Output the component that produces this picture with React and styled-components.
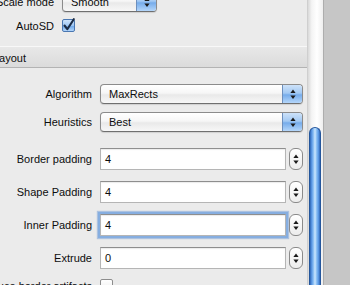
import React from "react";
import styled, { createGlobalStyle } from "styled-components";

const Global = createGlobalStyle`
  html, body { margin: 0; padding: 0; overflow: hidden; background: #c6c6c6; }
  body { font-family: "Liberation Sans", Arial, sans-serif; font-size: 11px; color: #111; }
  * { box-sizing: border-box; }
`;

const Window = styled.div`
  display: flex;
  width: 350px;
  height: 285px;
  overflow: hidden;
  background: #c6c6c6;
`;

const Panel = styled.div`
  flex: 0 0 308px;
  background: #ebebeb;
  border-right: 1px solid #cfcfcf;
  overflow: hidden;
  display: flex;
  flex-direction: column;
`;

const ScrolledContent = styled.div`
  margin-top: -9px;
  display: flex;
  flex-direction: column;
`;

const Group = styled.div`
  display: flex;
  flex-direction: column;
  padding-top: ${(p) => p.$padTop || 0}px;
`;

const Row = styled.div`
  display: grid;
  grid-template-columns: ${(p) => p.$labelWidth}px auto;
  column-gap: 8px;
  align-items: center;
  height: ${(p) => p.$h}px;
  margin-top: ${(p) => p.$mt || 0}px;
`;

const Label = styled.label`
  justify-self: end;
  white-space: nowrap;
  font-size: 11px;
  color: #0d0d0d;
`;

const SectionHeader = styled.div`
  height: 22px;
  margin-top: 14px;
  display: flex;
  align-items: center;
  background: linear-gradient(#e8e8e8, #dbdbdb);
  border-top: 1px solid #f8f8f8;
  border-bottom: 1px solid #b3b3b3;
  font-size: 11px;
  color: #0d0d0d;
`;

const HeaderText = styled.span`
  margin-left: -7px;
  padding-top: 1px;
`;

const Popup = styled.div`
  display: flex;
  align-items: stretch;
  width: ${(p) => p.$width}px;
  height: 20px;
  border: 1px solid #8b8b8b;
  border-bottom-color: #6f6f6f;
  border-radius: 4px;
  background: linear-gradient(#ffffff, #f6f6f6 45%, #e9e9e9 55%, #f7f7f7);
  box-shadow: 0 1px 1px rgba(0, 0, 0, 0.12);
  overflow: hidden;
`;

const PopupText = styled.span`
  flex: 1;
  display: flex;
  align-items: center;
  padding-left: 8px;
  font-size: 11px;
  color: #0d0d0d;
`;

const PopupArrows = styled.span`
  flex: 0 0 20px;
  display: flex;
  align-items: center;
  justify-content: center;
  border-left: 1px solid #6d8fbd;
  background: linear-gradient(#cde2f9, #a3c9f3 45%, #76aceb 55%, #b4d6fa);
`;

const FieldGroup = styled.div`
  display: flex;
  align-items: center;
  gap: 3px;
`;

const Field = styled.div`
  width: 186px;
  height: 22px;
  display: flex;
  align-items: center;
  padding-left: 4px;
  background: #fff;
  border: 1px solid #b5b5b5;
  border-top-color: #8e8e8e;
  box-shadow: inset 0 1px 1px rgba(0, 0, 0, 0.08)
    ${(p) => (p.$focused ? ", 0 0 0 2px #86aee0, 0 0 1px 3px rgba(120,160,215,0.55)" : "")};
  font-size: 11px;
  color: #0d0d0d;
`;

const Stepper = styled.div`
  width: 14px;
  height: 22px;
  border: 1px solid #8a8a8a;
  border-radius: 6px;
  background: linear-gradient(#ffffff, #ececec);
  display: flex;
  align-items: center;
  justify-content: center;
`;

const CheckBox = styled.span`
  width: 13px;
  height: 13px;
  display: grid;
  place-items: center;
  border-radius: 2px;
  border: 1px solid ${(p) => (p.$checked ? "#4a77b1" : "#8d8d8d")};
  background: ${(p) =>
    p.$checked
      ? "linear-gradient(#cde3fb, #9fc7f3 50%, #72aaea 55%, #b2d5fa)"
      : "linear-gradient(#ffffff, #ededed)"};
  svg { overflow: visible; }
`;

const Scrollbar = styled.div`
  flex: 0 0 16px;
  display: flex;
  flex-direction: column;
  padding: 0 2px 0 1px;
  background: linear-gradient(to right, #d9d9d9, #f4f4f4 25%, #ffffff 60%, #eeeeee);
  border-right: 1px solid #adadad;
`;

const ThumbSpacer = styled.div`
  flex: 0 0 127px;
`;

const Thumb = styled.div`
  flex: 1;
  border-radius: 6px 6px 0 0;
  border: 1px solid #24569c;
  border-bottom: none;
  background: linear-gradient(
    to right,
    #2f66b4,
    #5b99e6 18%,
    #98c8f6 38%,
    #cfe7fe 50%,
    #98c8f6 62%,
    #5b99e6 84%,
    #2f66b4
  );
`;

const Gutter = styled.div`
  flex: 1;
  background: #c6c6c6;
`;

const Arrows = () => (
  <svg width="6" height="14" viewBox="0 0 6 14">
    <path d="M3 2.5 L5.6 6 L0.4 6 Z" fill="#1a1a1a" />
    <path d="M0.4 8.5 L5.6 8.5 L3 12 Z" fill="#1a1a1a" />
  </svg>
);

const Check = () => (
  <svg width="11" height="11" viewBox="0 0 11 11">
    <path d="M1.5 5.5 L4.3 9.2 L10.8 -0.8" stroke="#1b2b44" strokeWidth="2.1" fill="none" strokeLinecap="round" strokeLinejoin="round" />
  </svg>
);

const Select = ({ value, width }) => (
  <Popup $width={width}>
    <PopupText>{value}</PopupText>
    <PopupArrows>
      <Arrows />
    </PopupArrows>
  </Popup>
);

const NumberField = ({ value, focused }) => (
  <FieldGroup>
    <Field $focused={focused}>{value}</Field>
    <Stepper>
      <Arrows />
    </Stepper>
  </FieldGroup>
);

const fields = [
  { label: "Border padding", value: "4", mt: 16 },
  { label: "Shape Padding", value: "4", mt: 11 },
  { label: "Inner Padding", value: "4", mt: 11, focused: true },
  { label: "Extrude", value: "0", mt: 11 },
];

export default function App() {
  return (
    <>
      <Global />
      <Window>
        <Panel>
          <ScrolledContent>
            <Group>
              <Row $labelWidth={54} $h={21}>
                <Label>Scale mode</Label>
                <Select value="Smooth" width={95} />
              </Row>
              <Row $labelWidth={54} $h={13} $mt={7}>
                <Label>AutoSD</Label>
                <CheckBox $checked>
                  <Check />
                </CheckBox>
              </Row>
            </Group>
            <SectionHeader>
              <HeaderText>Layout</HeaderText>
            </SectionHeader>
            <Group $padTop={16}>
              <Row $labelWidth={92} $h={20}>
                <Label>Algorithm</Label>
                <Select value="MaxRects" width={203} />
              </Row>
              <Row $labelWidth={92} $h={20} $mt={8}>
                <Label>Heuristics</Label>
                <Select value="Best" width={203} />
              </Row>
              {fields.map((f) => (
                <Row key={f.label} $labelWidth={92} $h={22} $mt={f.mt}>
                  <Label>{f.label}</Label>
                  <NumberField value={f.value} focused={f.focused} />
                </Row>
              ))}
              <Row $labelWidth={92} $h={13} $mt={10}>
                <Label>Reduce border artifacts</Label>
                <CheckBox />
              </Row>
            </Group>
          </ScrolledContent>
        </Panel>
        <Scrollbar>
          <ThumbSpacer />
          <Thumb />
        </Scrollbar>
        <Gutter />
      </Window>
    </>
  );
}
